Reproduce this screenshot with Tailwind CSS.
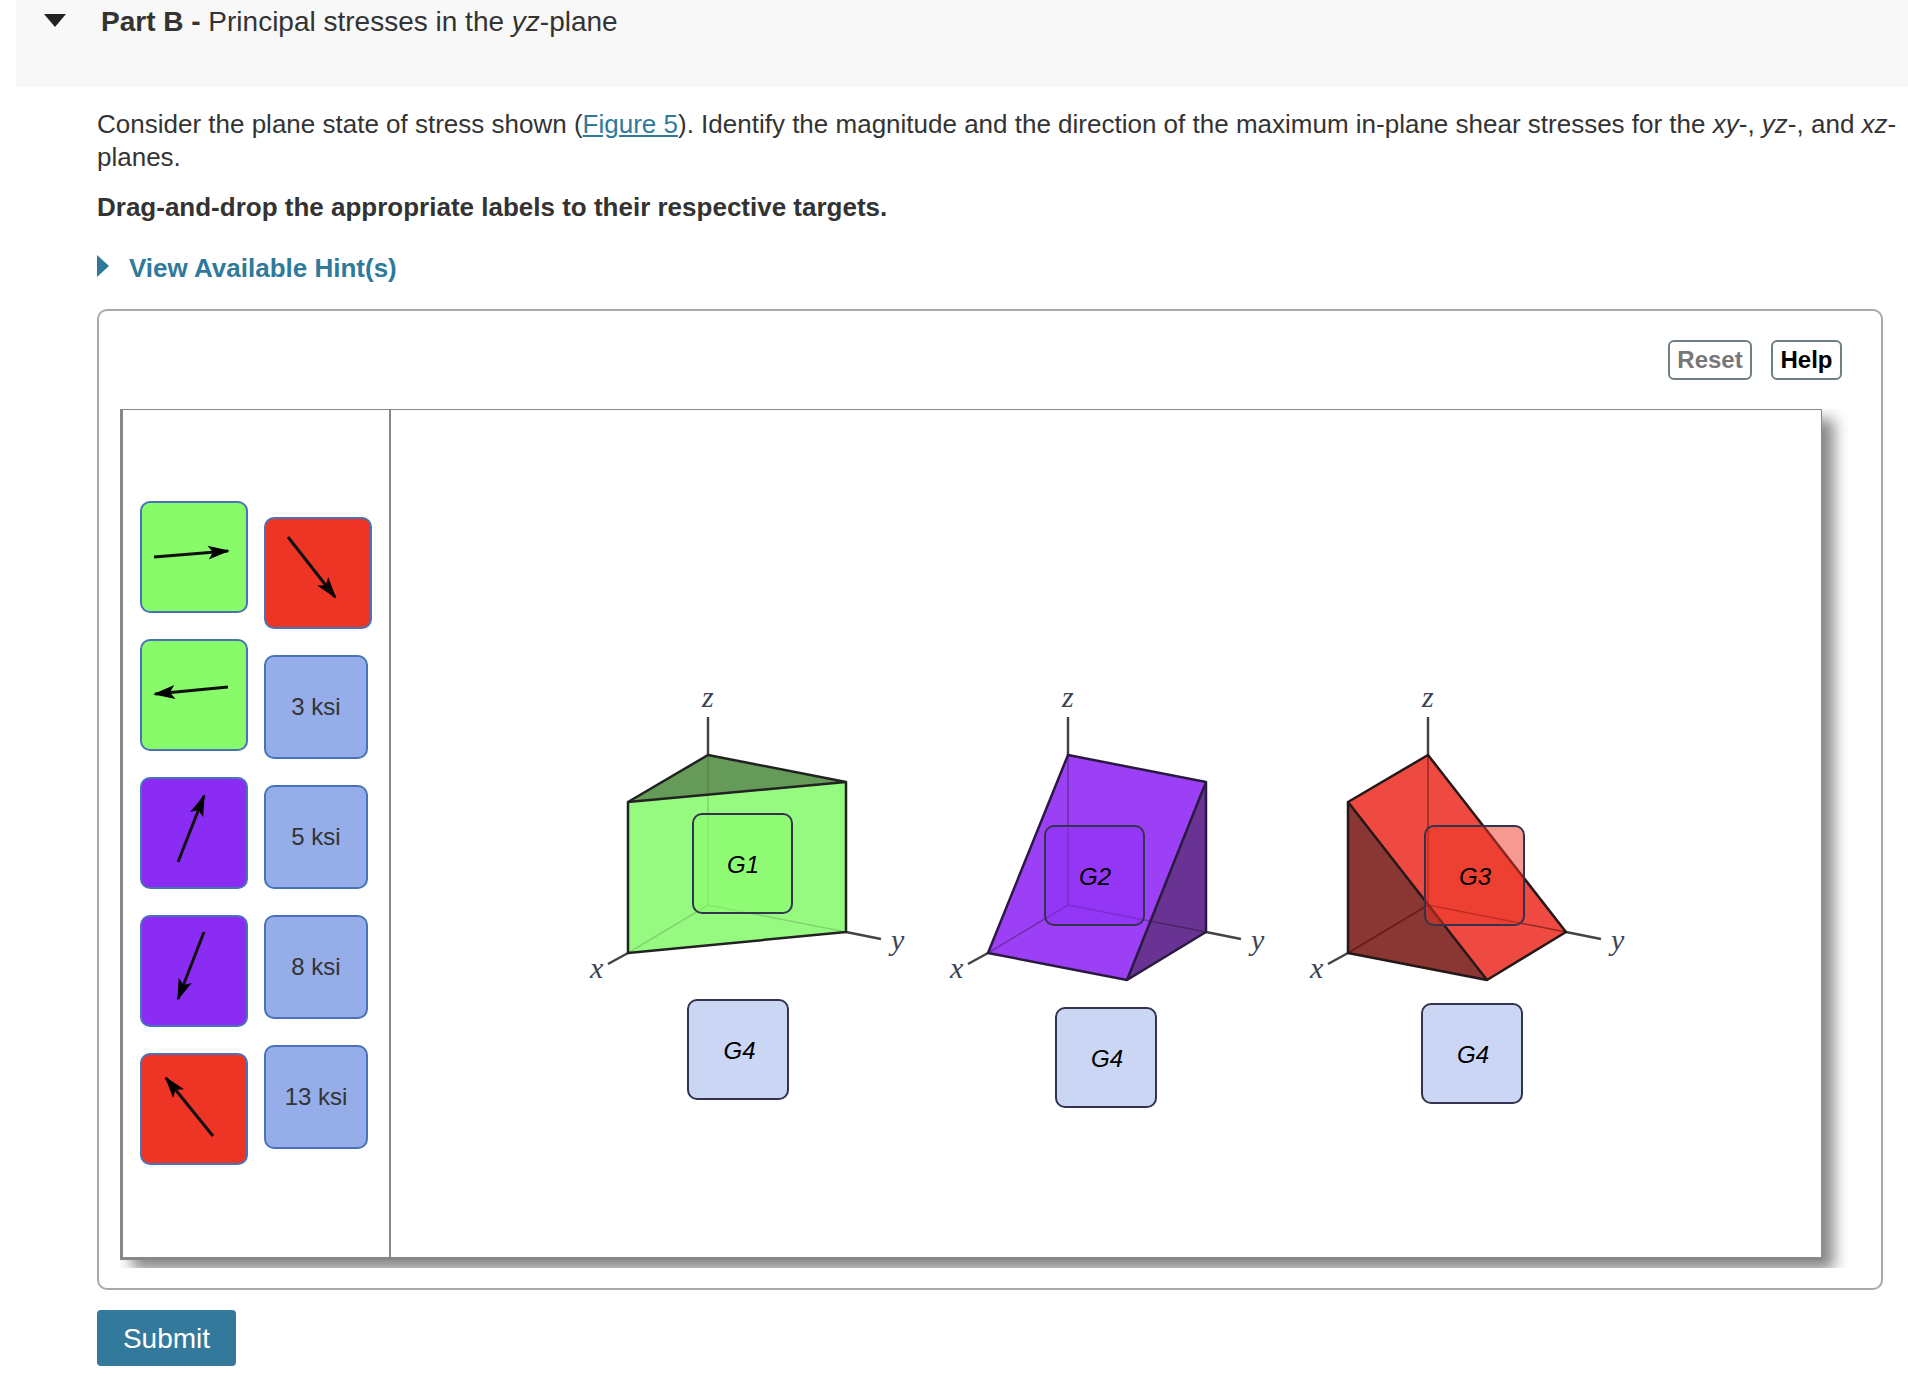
<!DOCTYPE html>
<html lang="en">
<head>
  <meta charset="UTF-8" />
  <title>Part B - Principal stresses in the yz-plane</title>
  <script src="https://cdn.jsdelivr.net/npm/@tailwindcss/browser@4"></script>
</head>
<body class="bg-white text-[#333] font-['Liberation_Sans',sans-serif] text-[26px] leading-[33px]">
  <svg class="absolute w-0 h-0">
    <defs>
      <marker id="head" markerUnits="userSpaceOnUse" markerWidth="26" markerHeight="20" refX="20" refY="10" orient="auto">
        <path d="M0 3 L22 10 L0 17 L5 10 Z" fill="#000" />
      </marker>
    </defs>
  </svg>

  <!-- part header -->
  <div class="ml-4 h-[87px] bg-[#f8f8f8] flex items-start pt-[6px]">
    <svg class="ml-7 mt-2 w-[22px] h-[13px]" viewBox="0 0 22 13"><path d="M0 0 H22 L11 13 Z" fill="#222" /></svg>
    <h2 class="ml-[35px] text-[28px] leading-[32px]"><b>Part B -</b> Principal stresses in the <i>yz</i>-plane</h2>
  </div>

  <div class="pl-[97px] pt-[21px]">
    <p class="pr-1">Consider the plane state of stress shown (<a href="#" class="text-[#2f7a9b] underline">Figure 5</a>). Identify the magnitude and the direction of the maximum in-plane shear stresses for the <i>xy</i>-, <i>yz</i>-, and <i>xz</i>-planes.</p>
    <p class="mt-[17px] font-bold">Drag-and-drop the appropriate labels to their respective targets.</p>
    <div class="mt-[28px] flex items-center text-[#2f7a9b] font-bold">
      <svg class="w-3 h-[22px] -mt-[6px]" viewBox="0 0 12 22"><path d="M0 0 L12 11 L0 22 Z" fill="#2f7a9b" /></svg>
      <span class="ml-[20px]">View Available Hint(s)</span>
    </div>

    <!-- drag and drop widget -->
    <div class="mt-[24px] w-[1786px] h-[981px] border-2 border-[#aaa] rounded-[10px] pt-[29px] pl-[21px]">
      <div class="flex justify-end gap-[19px] pr-[39px] h-10">
        <button class="w-[84px] h-10 border-2 border-[#6f7f85] rounded-md font-bold text-[24px] text-[#777] pb-[2px]">Reset</button>
        <button class="w-[71px] h-10 border-2 border-[#6f7f85] rounded-md font-bold text-[24px] text-black pb-[2px]">Help</button>
      </div>
      <div class="mt-[29px] w-[1730px] h-[859px] overflow-hidden">
        <div class="w-[1702px] h-[851px] border-t border-r border-l-[3px] border-b-[3px] border-[#888] bg-white shadow-[12px_10px_14px_#888] flex">
          <!-- label palette -->
          <div class="w-[268px] border-r-2 border-[#888] flex gap-4 pl-[17px] shrink-0">
            <div class="flex flex-col gap-[26px] pt-[91px]">
              <div class="w-[108px] h-[112px] bg-[#88fb6a] border-2 border-[#4a72b8] rounded-[10px]">
                <svg class="w-[108px] h-[112px] -m-[2px]" viewBox="0 0 108 112"><line x1="14" y1="56" x2="88" y2="50" stroke="#111" stroke-width="3" marker-end="url(#head)" /></svg>
              </div>
              <div class="w-[108px] h-[112px] bg-[#88fb6a] border-2 border-[#4a72b8] rounded-[10px]">
                <svg class="w-[108px] h-[112px] -m-[2px]" viewBox="0 0 108 112"><line x1="88" y1="48" x2="15" y2="55" stroke="#111" stroke-width="3" marker-end="url(#head)" /></svg>
              </div>
              <div class="w-[108px] h-[112px] bg-[#8b2cf5] border-2 border-[#4a72b8] rounded-[10px]">
                <svg class="w-[108px] h-[112px] -m-[2px]" viewBox="0 0 108 112"><line x1="38" y1="85" x2="64" y2="19" stroke="#111" stroke-width="3" marker-end="url(#head)" /></svg>
              </div>
              <div class="w-[108px] h-[112px] bg-[#8b2cf5] border-2 border-[#4a72b8] rounded-[10px]">
                <svg class="w-[108px] h-[112px] -m-[2px]" viewBox="0 0 108 112"><line x1="64" y1="17" x2="38" y2="84" stroke="#111" stroke-width="3" marker-end="url(#head)" /></svg>
              </div>
              <div class="w-[108px] h-[112px] bg-[#ee3424] border-2 border-[#4a72b8] rounded-[10px]">
                <svg class="w-[108px] h-[112px] -m-[2px]" viewBox="0 0 108 112"><line x1="73" y1="83" x2="26" y2="25" stroke="#111" stroke-width="3" marker-end="url(#head)" /></svg>
              </div>
            </div>
            <div class="flex flex-col gap-[26px] pt-[107px]">
              <div class="w-[108px] h-[112px] bg-[#ee3424] border-2 border-[#4a72b8] rounded-[10px]">
                <svg class="w-[108px] h-[112px] -m-[2px]" viewBox="0 0 108 112"><line x1="24" y1="20" x2="71" y2="80" stroke="#111" stroke-width="3" marker-end="url(#head)" /></svg>
              </div>
              <div class="w-[104px] h-[104px] bg-[#95ade8] border-2 border-[#4a72b8] rounded-[10px] flex items-center justify-center text-[24px] pb-[2px]">3 ksi</div>
              <div class="w-[104px] h-[104px] bg-[#95ade8] border-2 border-[#4a72b8] rounded-[10px] flex items-center justify-center text-[24px] pb-[2px]">5 ksi</div>
              <div class="w-[104px] h-[104px] bg-[#95ade8] border-2 border-[#4a72b8] rounded-[10px] flex items-center justify-center text-[24px] pb-[2px]">8 ksi</div>
              <div class="w-[104px] h-[104px] bg-[#95ade8] border-2 border-[#4a72b8] rounded-[10px] flex items-center justify-center text-[24px] pb-[2px]">13 ksi</div>
            </div>
          </div>

          <!-- figures and drop targets -->
          <div class="relative flex-1">
            <svg class="absolute left-[179px] top-[260px] w-[360px] h-[460px]" viewBox="0 0 360 460">
              <path d="M138 47V85M276 262L311 269M58 283L38 294" stroke="#444" stroke-width="2.5" fill="none" />
              <text x="132" y="37" class="font-['Liberation_Serif',serif] italic text-[30px]" fill="#3d4352">z</text>
              <text x="20" y="308" class="font-['Liberation_Serif',serif] italic text-[30px]" fill="#3d4352">x</text>
              <text x="321" y="280" class="font-['Liberation_Serif',serif] italic text-[30px]" fill="#3d4352">y</text>
              <path d="M138 85L276 112L58 132Z" fill="#659a58" />
              <path d="M58 132L276 112V262L58 283Z" fill="#97fa80" />
              <path d="M138 85V235M58 283L138 235L276 262" stroke="#000" stroke-opacity="0.15" stroke-width="1.5" fill="none" />
              <path d="M58 132L138 85L276 112L58 132V283L276 262V112" stroke="#222" stroke-width="2.5" fill="none" stroke-linejoin="round" />
            </svg>
            <svg class="absolute left-[539px] top-[260px] w-[360px] h-[460px]" viewBox="0 0 360 460">
              <path d="M138 47V85M276 262L311 269M58 283L38 294" stroke="#444" stroke-width="2.5" fill="none" />
              <text x="132" y="37" class="font-['Liberation_Serif',serif] italic text-[30px]" fill="#3d4352">z</text>
              <text x="20" y="308" class="font-['Liberation_Serif',serif] italic text-[30px]" fill="#3d4352">x</text>
              <text x="321" y="280" class="font-['Liberation_Serif',serif] italic text-[30px]" fill="#3d4352">y</text>
              <path d="M276 112V262L197 310Z" fill="#693394" />
              <path d="M138 85L276 112L197 310L58 283Z" fill="#9c40f5" />
              <path d="M138 85V235M58 283L138 235L276 262" stroke="#000" stroke-opacity="0.3" stroke-width="1.5" fill="none" />
              <path d="M138 85L276 112L197 310L58 283ZM276 112V262L197 310" stroke="#2a1a40" stroke-width="2.5" fill="none" stroke-linejoin="round" />
            </svg>
            <svg class="absolute left-[899px] top-[260px] w-[360px] h-[460px]" viewBox="0 0 360 460">
              <path d="M138 47V85M276 262L311 269M58 283L38 294" stroke="#444" stroke-width="2.5" fill="none" />
              <text x="132" y="37" class="font-['Liberation_Serif',serif] italic text-[30px]" fill="#3d4352">z</text>
              <text x="20" y="308" class="font-['Liberation_Serif',serif] italic text-[30px]" fill="#3d4352">x</text>
              <text x="321" y="280" class="font-['Liberation_Serif',serif] italic text-[30px]" fill="#3d4352">y</text>
              <path d="M58 132V283L197 310Z" fill="#8a3632" />
              <path d="M58 132L138 85L276 262L197 310Z" fill="#ee4a42" />
              <path d="M138 85V235M58 283L138 235L276 262" stroke="#400" stroke-opacity="0.5" stroke-width="1.5" fill="none" />
              <path d="M58 132L138 85L276 262L197 310ZM58 132V283L197 310" stroke="#241818" stroke-width="2.5" fill="none" stroke-linejoin="round" />
            </svg>

            <div class="absolute left-[301px] top-[403px] w-[101px] h-[101px] bg-[#88fb6a]/50 border-2 border-[#33334f] rounded-[10px] flex items-center justify-center italic text-[24px] text-black pt-[1px] pl-[1px]">G1</div>
            <div class="absolute left-[296px] top-[589px] w-[102px] h-[101px] bg-[#95ade8]/50 border-2 border-[#33334f] rounded-[10px] flex items-center justify-center italic text-[24px] text-black pt-[1px] pl-[3px]">G4</div>
            <div class="absolute left-[653px] top-[415px] w-[101px] h-[101px] bg-[#8b2cf5]/50 border-2 border-[#33334f] rounded-[10px] flex items-center justify-center italic text-[24px] text-black pt-[1px] pl-[1px]">G2</div>
            <div class="absolute left-[664px] top-[597px] w-[102px] h-[101px] bg-[#95ade8]/50 border-2 border-[#33334f] rounded-[10px] flex items-center justify-center italic text-[24px] text-black pt-[1px] pl-[2px]">G4</div>
            <div class="absolute left-[1033px] top-[415px] w-[101px] h-[101px] bg-[#ee3424]/50 border-2 border-[#33334f] rounded-[10px] flex items-center justify-center italic text-[24px] text-black pt-[1px] pl-[1px]">G3</div>
            <div class="absolute left-[1030px] top-[593px] w-[102px] h-[101px] bg-[#95ade8]/50 border-2 border-[#33334f] rounded-[10px] flex items-center justify-center italic text-[24px] text-black pt-[1px] pl-[2px]">G4</div>
          </div>
        </div>
      </div>
    </div>

    <button class="mt-[20px] w-[139px] h-[56px] bg-[#33799b] rounded-[4px] text-white text-[28px]">Submit</button>
  </div>
</body>
</html>
